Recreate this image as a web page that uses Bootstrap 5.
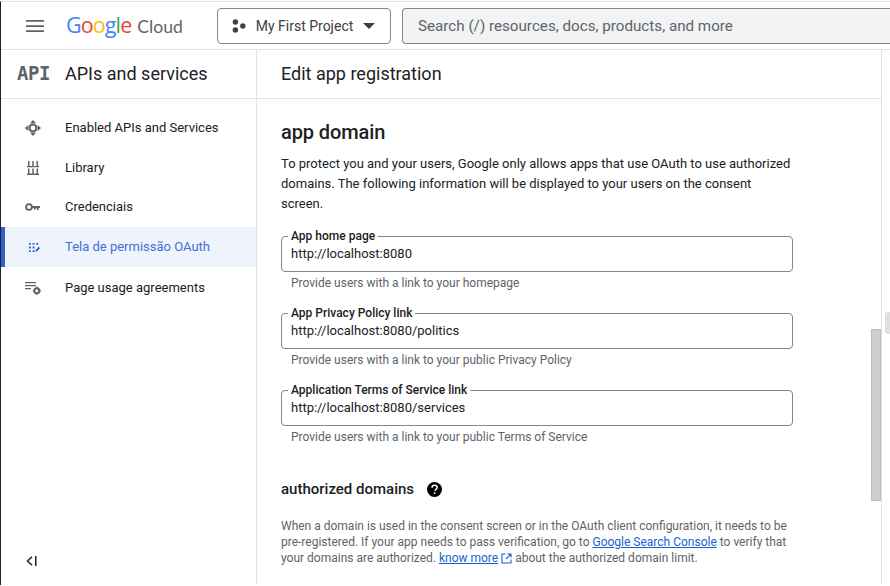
<!DOCTYPE html>
<html lang="en">
<head>
<meta charset="utf-8">
<title>Edit app registration</title>
<link href="https://cdn.jsdelivr.net/npm/bootstrap@5.3.0/dist/css/bootstrap.min.css" rel="stylesheet">
<style>
html{height:100%;overflow:hidden;padding-top:1px;background:#fff}
body{height:calc(100% - 1px);overflow:hidden;font-family:Roboto,sans-serif;color:#202124;background:#fff;font-size:13px;border-left:1px solid #202124;border-top:1px solid #e3e3e3;position:relative}
.topbar{height:48px;border-bottom:1px solid #e3e3e3;flex:none;padding-top:1px}
.burger{width:65px;padding-left:25px}
.logoword{width:153px;font-size:22px;line-height:26px;white-space:nowrap}
.logog{font-family:"Open Sans",sans-serif;font-size:21.5px;letter-spacing:-.9px;font-weight:500}
.logoc{font-family:Lato,sans-serif;color:#5f6368;font-size:17.6px;margin-left:6px}
.c1{color:#4285f4}.c2{color:#ea4335}.c3{color:#fbbc05}.c4{color:#34a853}
.projbtn{width:174px;height:36px;border:1px solid #80868b;border-radius:4px;padding:0 15px 0 14px;font-size:14px;color:#3c4043;margin-left:-2px;background:#fff}
.searchbox{height:36px;flex:1;border:1px solid #80868b;border-right:0;border-radius:4px 0 0 4px;background:#f1f3f4;color:#5f6368;font-size:15.2px;margin-left:11px;padding-left:15px;line-height:34px;white-space:nowrap;overflow:hidden}
.caret-tri{width:0;height:0;border-left:6px solid transparent;border-right:6px solid transparent;border-top:6px solid #3c4043}
.bodyrow{min-height:0}
.sidebar{width:256px;flex:none;border-right:1px solid #e3e3e3}
.sidehead{height:49px;border-bottom:1px solid #e3e3e3;flex:none;padding-bottom:2px}
.apimark{width:64px;padding-left:16px;font-family:"DejaVu Sans Mono",monospace;font-weight:700;color:#5f6368;font-size:19px;letter-spacing:-.4px}
.sidetitle{font-size:18px;color:#202124}
.sideitem{height:40px;color:#202124;text-decoration:none;font-size:13px}
.sideitem.lowered{padding-top:2px}
.sideicon{width:64px;padding-left:24px;line-height:0}
.sideicon.inset-icon{padding-left:26px}
.sideitem.active-item{background:#eff4fc;color:#3f6fd8;border-left:4px solid #2f5fce}
.sideitem.active-item .sideicon{width:60px;padding-left:23px}
.collapser{padding-left:25px;padding-bottom:19px;line-height:0}
.mainpane{min-width:0}
.pagehead{height:49px;border-bottom:1px solid #e3e3e3;flex:none;padding-left:24px;font-size:18px;padding-bottom:2px}
.gutterline{width:1px;background:#e3e3e3;flex:none;margin-right:8px}
.formcol{padding-left:24px;padding-right:88px;width:624px;flex:none}
.secttitle{font-size:20px;font-weight:500;margin:20px 0 0;line-height:26px;letter-spacing:-.1px}
.intro{margin:9px 0 0;line-height:20px;font-size:13px;width:512px}
.fieldwrap{margin-top:22px;position:relative}
.fieldwrap+.fieldwrap{margin-top:22px}
.fieldbox{height:36px;border:1px solid #80868b;border-radius:4px;padding:0 9px;font-size:13px;line-height:34px;background:#fff}
.fieldlabel{position:absolute;left:7px;top:-7px;padding:0 3px;background:#fff;font-size:12px;font-weight:500;line-height:14px;color:#202124}
.fieldhint{font-size:12px;color:#5f6368;padding-left:10px;line-height:16px;margin-top:3px}
.subtitle{font-size:15px;font-weight:500;margin:34px 0 0;line-height:20px}
.helpdot{width:15px;height:15px;margin-left:13px}
.desc{margin:19px 0 0;font-size:12px;line-height:16px;color:#5f6368;width:512px}
.desc a{color:#1a5fd0;text-decoration:underline}
.vscroll{position:absolute;left:870px;top:327px;width:10px;height:172px;background:#cdcdcd;border:1px solid #bdbdbd}
.vthumb{position:absolute;left:884px;top:310px;width:6px;height:22px;background:#e0e0e0;border-radius:3px 0 0 3px}
</style>
</head>
<body class="d-flex flex-column">
<header class="topbar d-flex align-items-center">
  <div class="burger"><svg width="18" height="12" viewBox="0 0 18 12" class="d-block"><path d="M0 0h18v1.700H0zM0 5.200h18v1.700H0zM0 10.300h18V12H0z" fill="#5f6368"/></svg></div>
  <div class="logoword"><span class="logog"><span class="c1">G</span><span class="c2">o</span><span class="c3">o</span><span class="c1">g</span><span class="c4">l</span><span class="c2">e</span></span><span class="logoc">Cloud</span></div>
  <div class="projbtn d-flex align-items-center justify-content-between">
    <svg width="14" height="14" viewBox="0 0 14 14"><circle cx="3.400" cy="3" r="2.700" fill="#3c4043"/><circle cx="3.400" cy="11" r="2.700" fill="#3c4043"/><circle cx="10.800" cy="7" r="2.700" fill="#3c4043"/></svg>
    <span>My First Project</span>
    <span class="caret-tri"></span>
  </div>
  <div class="searchbox">Search (/) resources, docs, products, and more</div>
</header>
<div class="bodyrow d-flex flex-grow-1">
  <nav class="sidebar d-flex flex-column">
    <div class="sidehead d-flex align-items-center">
      <div class="apimark">API</div>
      <div class="sidetitle">APIs and services</div>
    </div>
    <div class="flex-grow-1 pt-2">
      <a class="sideitem lowered d-flex align-items-center" href="#"><span class="sideicon"><svg width="16" height="16" viewBox="0 0 16 16"><path d="M8 0l3 3.200H5zM8 16l-3-3.200h6zM0 8l3.200-3v6zM16 8l-3.200 3V5z" fill="#5f6368"/><circle cx="8" cy="8" r="3.500" fill="none" stroke="#5f6368" stroke-width="2.200"/><circle cx="8" cy="8" r="1" fill="#fff"/></svg></span>Enabled APIs and Services</a>
      <a class="sideitem lowered d-flex align-items-center" href="#"><span class="sideicon inset-icon"><svg width="12" height="14" viewBox="0 0 12 14" fill="#5f6368"><path d="M1 0h1.500v5H1zM5.250 0h1.500v5h-1.500zM9.500 0H11v5H9.500zM0 5h12v1.300H0zM1 7.500h1.500v5H1zM5.250 7.500h1.500v5h-1.500zM9.500 7.500H11v5H9.500zM0 12.500h12V14H0z"/></svg></span>Library</a>
      <a class="sideitem d-flex align-items-center" href="#"><span class="sideicon"><svg width="15" height="8" viewBox="0 0 15 8"><circle cx="4" cy="4" r="2.900" fill="none" stroke="#5f6368" stroke-width="1.900"/><path d="M7 3h8v2h-1.300v2h-1.800V5h-1v1.400H9V5H7z" fill="#5f6368"/></svg></span>Credenciais</a>
      <a class="sideitem active-item d-flex align-items-center" href="#"><span class="sideicon"><svg width="12" height="11" viewBox="0 0 13 12" fill="#2f5fce"><path d="M1 1h2v2H1zM5 1h2v2H5zM9 1h2v2H9zM1 5h2v2H1zM5 5h2v2H5zM1 9h2v2H1zM5 9h2v2H5zM8 11l.3-2.400 3.400-3.300 1.400 1.400-3.400 3.500z"/></svg></span>Tela de permissão OAuth</a>
      <a class="sideitem lowered d-flex align-items-center" href="#"><span class="sideicon"><svg width="16" height="13" viewBox="0 0 16 13" fill="#5f6368"><path d="M0 0h11v1.300H0zM0 3h11v1.300H0zM0 6h6v1.300H0z"/><circle cx="11.800" cy="8.800" r="2.500" fill="none" stroke="#5f6368" stroke-width="2"/><path d="M11 4.800h1.600v1.400H11zM11 11.400h1.600v1.400H11zM7.800 8h1.400v1.600H7.800zM14.400 8h1.400v1.600h-1.400z"/></svg></span>Page usage agreements</a>
    </div>
    <div class="collapser"><svg width="11" height="10" viewBox="0 0 11 10"><path d="M6 .7L1.500 5 6 9.300" fill="none" stroke="#202124" stroke-width="1.500"/><path d="M9 0h1.500v10H9z" fill="#202124"/></svg></div>
  </nav>
  <div class="mainpane d-flex flex-column flex-grow-1">
    <div class="pagehead d-flex align-items-center">Edit app registration</div>
    <div class="formcol flex-grow-1">
      <h2 class="secttitle">app domain</h2>
      <p class="intro">To protect you and your users, Google only allows apps that use OAuth to use authorized domains. The following information will be displayed to your users on the consent screen.</p>
      <div class="fieldwrap">
        <div class="fieldbox">http://localhost:8080</div>
        <div class="fieldlabel">App home page</div>
        <div class="fieldhint">Provide users with a link to your homepage</div>
      </div>
      <div class="fieldwrap">
        <div class="fieldbox">http://localhost:8080/politics</div>
        <div class="fieldlabel">App Privacy Policy link</div>
        <div class="fieldhint">Provide users with a link to your public Privacy Policy</div>
      </div>
      <div class="fieldwrap">
        <div class="fieldbox">http://localhost:8080/services</div>
        <div class="fieldlabel">Application Terms of Service link</div>
        <div class="fieldhint">Provide users with a link to your public Terms of Service</div>
      </div>
      <div class="subtitle d-flex align-items-center">authorized domains
        <svg class="helpdot" viewBox="0 0 15 15"><circle cx="7.500" cy="7.500" r="7.500" fill="#000"/><path d="M5 5.800c0-1.600 1.100-2.600 2.600-2.600 1.500 0 2.500 1 2.500 2.200 0 1.800-2 1.900-2 3.600" fill="none" stroke="#fff" stroke-width="1.500"/><rect x="6.800" y="10.300" width="1.600" height="1.600" fill="#fff"/></svg>
      </div>
      <p class="desc">When a domain is used in the consent screen or in the OAuth client configuration, it needs to be pre-registered. If your app needs to pass verification, go to <a href="#">Google Search Console</a> to verify that your domains are authorized. <a href="#">know more</a> <svg width="11" height="11" viewBox="0 0 11 11" fill="none" stroke="#1a5fd0" stroke-width="1.100"><path d="M4.500 1H1v9h9V6.500M6.500 1H10v3.500M10 1L5 6"/></svg> about the authorized domain limit.</p>
    </div>
  </div>
  <div class="gutterline"></div>
</div>
<div class="vscroll"></div>
<div class="vthumb"></div>
</body>
</html>
